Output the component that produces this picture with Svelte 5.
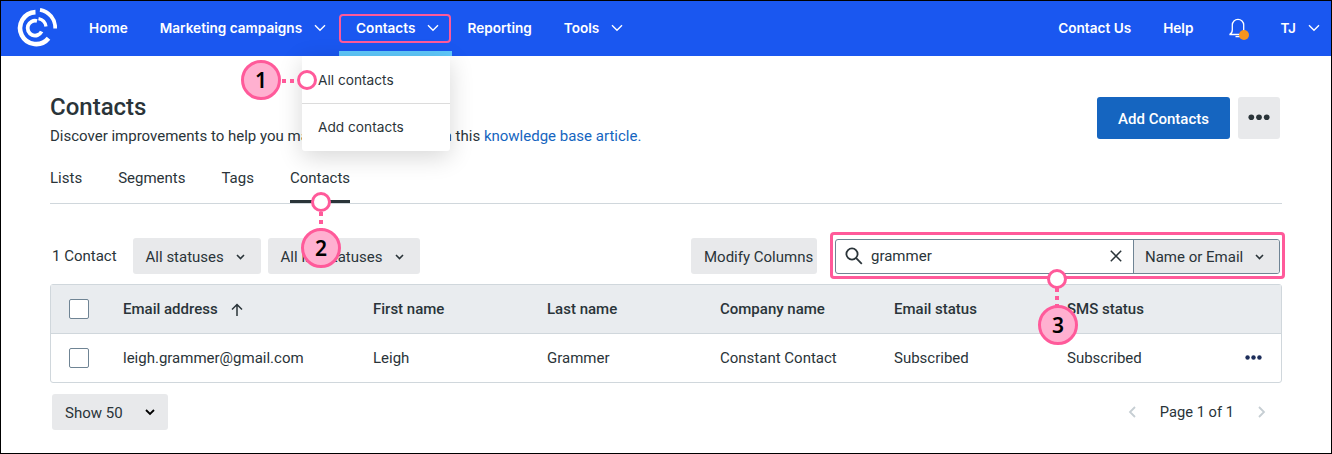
<script>
    const leftNav = [
        { label: 'Home' },
        { label: 'Marketing campaigns', caret: true },
        { label: 'Contacts', caret: true, active: true },
        { label: 'Reporting' },
        { label: 'Tools', caret: true }
    ];
    const tabs = ['Lists', 'Segments', 'Tags', 'Contacts'];
    const columns = ['First name', 'Last name', 'Company name', 'Email status', 'SMS status'];
    const row = ['Leigh', 'Grammer', 'Constant Contact', 'Subscribed', 'Subscribed'];
</script>

{#snippet caret()}
    <svg class="caret" width="12" height="8" viewBox="0 0 12 8"><path d="M1 1.2l5 5 5-5" fill="none" stroke="currentColor" stroke-width="1.4"/></svg>
{/snippet}

{#snippet small_caret()}
    <svg class="small-caret" width="9" height="6" viewBox="0 0 9 6"><path d="M1 1l3.5 3.5L8 1" fill="none" stroke="currentColor" stroke-width="1.6"/></svg>
{/snippet}

{#snippet dots(size)}
    <svg width={size} height={size * 0.3} viewBox="0 0 20 6"><circle cx="3" cy="3" r="2.6"/><circle cx="10" cy="3" r="2.6"/><circle cx="17" cy="3" r="2.6"/></svg>
{/snippet}

<div class="page">
    <header class="topbar">
        <svg class="logo" width="40" height="40" viewBox="0 0 40 40" fill="none" stroke="#fff">
            <path d="M18.5 4.1A16 16 0 1 0 31.5 30.2" stroke-width="4.6"/>
            <path d="M23 1.8A18.2 18.2 0 0 1 38.2 20.5" stroke-width="3.8"/>
            <path d="M24.6 23.5A7.4 7.4 0 1 1 20 13" stroke-width="3.8"/>
            <path d="M21.5 10.6A9.5 9.5 0 0 1 29 18.5" stroke-width="3.2"/>
        </svg>
        <nav class="nav">
            {#each leftNav as item}
                <span class="nav-item" class:active={item.active}>
                    {item.label}
                    {#if item.caret}{@render caret()}{/if}
                </span>
            {/each}
        </nav>
        <div class="nav right">
            <span class="nav-item">Contact Us</span>
            <span class="nav-item">Help</span>
            <span class="bell">
                <svg width="20" height="20" viewBox="0 0 20 20" fill="none" stroke="#fff" stroke-width="1.3">
                    <path d="M1.5 16.5c2-.8 2.8-2.2 2.8-4.5V7a5.7 5.7 0 0 1 11.4 0v5c0 2.3.8 3.7 2.8 4.5z"/>
                    <path d="M7.5 18.6h5"/>
                </svg>
                <i class="badge-dot"></i>
            </span>
            <span class="nav-item user">TJ {@render caret()}</span>
        </div>
    </header>

    <div class="menu">
        <div class="menu-item">All contacts</div>
        <div class="menu-item">Add contacts</div>
    </div>

    <main class="content">
        <div class="title-row">
            <div>
                <h1>Contacts</h1>
                <p>Discover improvements to help you manage your contacts in this <a href="#top">knowledge base article.</a></p>
            </div>
            <div class="title-actions">
                <button class="primary">Add Contacts</button>
                <button class="more">{@render dots(22)}</button>
            </div>
        </div>

        <div class="tabs">
            {#each tabs as tab}
                <span class="tab" class:current={tab === 'Contacts'}>{tab}</span>
            {/each}
        </div>

        <div class="toolbar">
            <span class="count">1 Contact</span>
            <button class="grey status">All statuses {@render small_caret()}</button>
            <button class="grey sms">All list statuses {@render small_caret()}</button>
            <button class="grey columns">Modify Columns</button>
            <div class="search">
                <svg width="20" height="20" viewBox="0 0 20 20" fill="none" stroke="#2a3439" stroke-width="1.8"><circle cx="8" cy="8" r="5.6"/><path d="M12.2 12.2l5.6 5.6"/></svg>
                <span class="query">grammer</span>
                <svg width="12" height="12" viewBox="0 0 12 12" fill="none" stroke="#2a3439" stroke-width="1.5"><path d="M.8.8l10.4 10.4M11.2.8L.8 11.2"/></svg>
                <span class="scope">Name or Email {@render small_caret()}</span>
            </div>
        </div>

        <div class="table">
            <div class="tr head">
                <span class="check"></span>
                <span class="sort">Email address
                    <svg width="12" height="13" viewBox="0 0 12 13" fill="none" stroke="#2a3439" stroke-width="1.5"><path d="M6 13V1.5M1 6.5l5-5 5 5"/></svg>
                </span>
                {#each columns as c}<span>{c}</span>{/each}
                <span></span>
            </div>
            <div class="tr">
                <span class="check"></span>
                <span>leigh.grammer@gmail.com</span>
                {#each row as c}<span>{c}</span>{/each}
                <span class="row-more">{@render dots(17)}</span>
            </div>
        </div>

        <div class="footer">
            <button class="grey show">Show 50
                <svg width="10" height="7" viewBox="0 0 10 7"><path d="M1 1l4 4 4-4" fill="none" stroke="#000" stroke-width="1.8"/></svg>
            </button>
            <div class="pager">
                <svg width="8" height="12" viewBox="0 0 8 12" fill="none" stroke="#c6ced3" stroke-width="1.8"><path d="M7 1L2 6l5 5"/></svg>
                <span>Page 1 of 1</span>
                <svg width="8" height="12" viewBox="0 0 8 12" fill="none" stroke="#c6ced3" stroke-width="1.8"><path d="M1 1l5 5-5 5"/></svg>
            </div>
        </div>
    </main>

    <!-- callouts laid over the screenshot -->
    <div class="frame frame-search"></div>
    <i class="line line-1"></i>
    <i class="line line-2"></i>
    <i class="line line-3"></i>
    <i class="ring ring-1"></i>
    <i class="ring ring-2"></i>
    <i class="ring ring-3"></i>
    <b class="num num-1">1</b>
    <b class="num num-2">2</b>
    <b class="num num-3">3</b>
</div>

<style>
    :global(body) {
        margin: 0;
        background: #fff;
    }

    .page {
        position: relative;
        box-sizing: border-box;
        width: 1332px;
        height: 454px;
        border: 1px solid #000;
        overflow: hidden;
        font-family: Roboto, sans-serif;
        font-size: 15px;
        color: #2a3439;
    }

    button {
        font: inherit;
        color: inherit;
        border: 0;
        padding: 0;
    }

    .topbar {
        display: flex;
        align-items: center;
        box-sizing: border-box;
        height: 55px;
        padding: 0 11px 1px 16px;
        background: #1a57f0;
        color: #fff;
    }

    .logo {
        margin-right: 32px;
    }

    .nav {
        display: flex;
        align-items: center;
        gap: 32px;
        font-family: Inter, sans-serif;
        font-weight: 600;
        font-size: 13.6px;
    }

    .nav.right {
        margin-left: auto;
    }

    .nav-item {
        display: flex;
        align-items: center;
        gap: 12px;
        position: relative;
    }

    .nav-item.active {
        margin: 0 -16px 0 -19px;
        padding: 0 10px 0 15px;
        height: 25px;
        border: 2.5px solid #ff5a9a;
        border-radius: 4px;
    }

    .nav-item.active::after {
        content: '';
        position: absolute;
        left: -2.5px;
        right: -2.5px;
        bottom: -15.5px;
        height: 5px;
        background: #5ec8fa;
    }

    .bell {
        position: relative;
        display: flex;
        margin-left: 3px;
    }

    .badge-dot {
        position: absolute;
        left: 11px;
        top: 12px;
        width: 10px;
        height: 10px;
        border-radius: 50%;
        background: #f7941d;
    }

    .menu {
        position: absolute;
        left: 301px;
        top: 55px;
        width: 148px;
        background: #fff;
        border-radius: 0 0 3px 3px;
        box-shadow: 0 6px 24px rgba(0, 0, 0, 0.16);
        font-family: Inter, sans-serif;
        font-size: 13.7px;
        z-index: 2;
    }

    .menu-item {
        height: 47px;
        line-height: 48px;
        padding-left: 16px;
    }

    .menu-item + .menu-item {
        border-top: 1px solid #dcdcdc;
        line-height: 47px;
    }

    .content {
        padding: 0 49px;
    }

    .title-row {
        display: flex;
        justify-content: space-between;
        padding-top: 36px;
    }

    h1 {
        margin: 0;
        font-size: 24px;
        font-weight: 500;
        line-height: 30px;
    }

    p {
        margin: 4px 0 0;
        line-height: 20px;
    }

    a {
        color: #1565c0;
        text-decoration: none;
    }

    .title-actions {
        display: flex;
        gap: 8px;
        margin: 5px 2px 0 0;
    }

    .primary {
        width: 133px;
        height: 42px;
        padding-top: 1px;
        border-radius: 3px;
        background: #1565c0;
        color: #fff;
        font-weight: 500;
    }

    .more {
        display: flex;
        align-items: center;
        justify-content: center;
        width: 42px;
        height: 42px;
        padding-bottom: 2px;
        border-radius: 3px;
        background: #e8e9eb;
    }

    .more svg,
    .row-more svg {
        fill: #2a3439;
    }

    .tabs {
        display: flex;
        gap: 36px;
        margin-top: 21px;
        border-bottom: 1px solid #d0d7dc;
    }

    .tab {
        height: 36px;
        line-height: 22px;
    }

    .tab.current {
        box-shadow: inset 0 -3px 0 #2a3439;
    }

    .toolbar {
        display: flex;
        align-items: center;
        margin-top: 34px;
        height: 36px;
    }

    .count {
        margin: 0 16px 0 2px;
    }

    .grey {
        display: flex;
        align-items: center;
        justify-content: space-between;
        height: 36px;
        box-sizing: border-box;
        background: #e8e9eb;
        border-radius: 3px;
        padding: 1px 16px 0 13px;
        white-space: nowrap;
    }

    .status {
        width: 128px;
        margin-right: 7px;
    }

    .sms {
        width: 152px;
    }

    .columns {
        margin-left: auto;
        width: 126px;
    }

    .search {
        display: flex;
        align-items: center;
        box-sizing: border-box;
        width: 445px;
        height: 35px;
        margin: 0 2px 0 18px;
        padding-left: 8px;
        border: 1px solid #6f8494;
        border-radius: 3px;
    }

    .query {
        flex: 1;
        margin-left: 7px;
    }

    .scope {
        display: flex;
        align-items: center;
        justify-content: space-between;
        box-sizing: border-box;
        width: 146px;
        height: 33px;
        margin-left: 11px;
        padding: 1px 15px 0 11px;
        background: #e8e9eb;
        border-left: 1px solid #6f8494;
        border-radius: 0 2px 2px 0;
    }

    .small-caret {
        flex: none;
    }

    .table {
        margin-top: 10px;
        border: 1px solid #d0d7dc;
        border-radius: 3px;
    }

    .tr {
        display: grid;
        grid-template-columns: 72px 250px 174px 173px 174px 173px 1fr 36px;
        align-items: center;
        height: 48px;
    }

    .tr.head {
        border-bottom: 1px solid #d0d7dc;
        background: #e9ecef;
        font-weight: 500;
    }

    .check {
        width: 18px;
        height: 18px;
        margin-left: 18px;
        border: 1px solid #6f8494;
        border-radius: 2px;
        background: #fff;
    }

    .sort {
        display: flex;
        align-items: center;
        gap: 13px;
    }

    .row-more svg {
        display: block;
        fill: #1d2d5a;
    }

    .footer {
        display: flex;
        align-items: center;
        justify-content: space-between;
        margin-top: 11px;
    }

    .show {
        width: 116px;
        margin-left: 2px;
        padding: 1px 13px 0;
    }

    .pager {
        display: flex;
        align-items: center;
        gap: 24px;
        margin-right: 16px;
        font-size: 14.7px;
    }

    .frame {
        position: absolute;
        box-sizing: border-box;
        border: 3px solid #ff5a9a;
        border-radius: 4px;
    }

    .frame-search {
        left: 829px;
        top: 231px;
        width: 455px;
        height: 47px;
    }

    .line {
        position: absolute;
        z-index: 3;
    }

    .line-1 {
        left: 281px;
        top: 77.5px;
        width: 16px;
        height: 4px;
        background: repeating-linear-gradient(to right, #ff5a9a 0 4px, transparent 4px 8px);
    }

    .line-2 {
        left: 318px;
        top: 211px;
        width: 4px;
        height: 17px;
        background: repeating-linear-gradient(to bottom, #ff5a9a 0 4px, transparent 4px 8px);
    }

    .line-3 {
        left: 1054px;
        top: 287px;
        width: 4px;
        height: 18px;
        background: repeating-linear-gradient(to bottom, #ff5a9a 0 4px, transparent 4px 8px);
    }

    .ring {
        position: absolute;
        z-index: 3;
        box-sizing: border-box;
        width: 20px;
        height: 20px;
        border: 3px solid #ff5a9a;
        border-radius: 50%;
        background: #fff;
    }

    .ring-1 {
        left: 296px;
        top: 69px;
    }

    .ring-2 {
        left: 310px;
        top: 191px;
    }

    .ring-3 {
        left: 1046px;
        top: 268px;
    }

    .num {
        position: absolute;
        z-index: 4;
        box-sizing: border-box;
        width: 40px;
        height: 40px;
        border: 3px solid #ff5a9a;
        border-radius: 50%;
        background: #ffb0d0;
        color: #000;
        font-family: "Noto Sans", sans-serif;
        font-size: 21px;
        font-weight: 600;
        line-height: 34px;
        text-align: center;
    }

    .num-1 {
        left: 240px;
        top: 59px;
    }

    .num-2 {
        left: 300px;
        top: 227px;
    }

    .num-3 {
        left: 1037px;
        top: 304px;
    }
</style>
